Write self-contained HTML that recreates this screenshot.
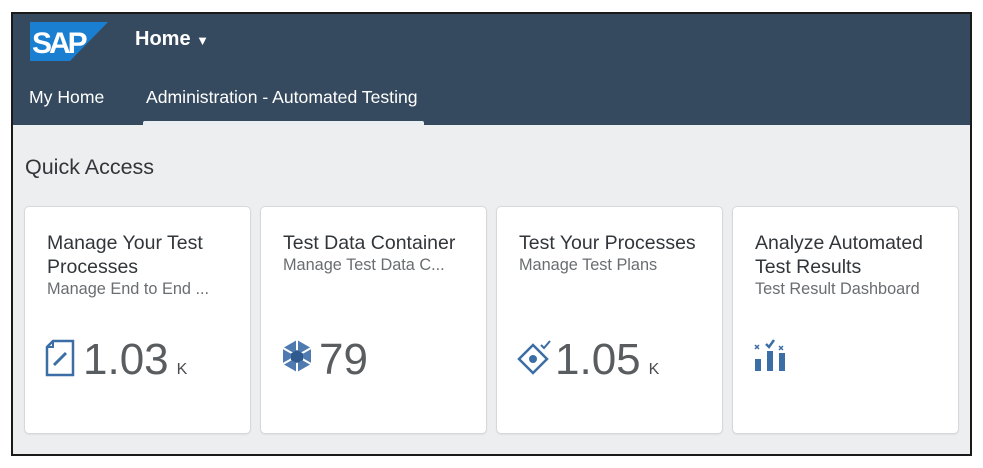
<!DOCTYPE html><html><head><style>
body{margin:0;width:983px;height:468px;background:#fff;font-family:"Liberation Sans",sans-serif;position:relative;overflow:hidden}
.frame{position:absolute;left:11px;top:12px;width:957px;height:440px;border:2px solid #1a1a1a;background:#eceeef;overflow:hidden}
.hdr{position:absolute;left:0;top:0;width:100%;height:111px;background:#354a5f}
.logo{position:absolute;left:17px;top:8px}
.home{position:absolute;left:122px;top:14px;color:#fff;font-weight:bold;font-size:20px}
.nav{position:absolute;top:73px;color:#fff;font-size:17.6px}
.ul{position:absolute;left:130px;top:107px;width:281px;height:4px;background:#e8eef2;border-radius:2px 2px 0 0}
.qa{position:absolute;left:12px;top:141px;font-size:21.5px;color:#32363a}
.tile{position:absolute;top:193px;width:225px;height:226px;background:#fff;border-radius:4px;box-shadow:0 0 0 1px #d6d9dc,0 1px 2px rgba(0,0,0,.15)}
.t{position:absolute;left:22px;top:24px;font-size:19.5px;color:#32363a;line-height:24px}
.s{font-size:16.3px;color:#6a6d70;line-height:20px}
.num{position:absolute;left:58px;top:128px;font-size:44px;color:#5a5d60;font-weight:300}
.k{font-size:16px;color:#4a4d50;margin-left:8px}
.ic{position:absolute;left:20px;top:132px}
</style></head><body><div class="frame">
<div class="hdr">
<svg class="logo" width="78" height="39" viewBox="0 0 78 39"><polygon points="0,0 78,0 40,39 0,39" fill="#1a7fd0"/><text x="2" y="31" font-family="Liberation Sans" font-weight="bold" font-size="30" fill="#fff" letter-spacing="-3">SAP</text></svg>
<div class="home">Home <span style="font-size:13px">▼</span></div>
<div class="nav" style="left:16px">My Home</div>
<div class="nav" style="left:133px">Administration - Automated Testing</div>
<div class="ul"></div>
</div>
<div class="qa">Quick Access</div>
<div class="tile" style="left:12px"><div class="t">Manage Your Test<br>Processes<div class="s">Manage End to End ...</div></div>
<svg class="ic" width="30" height="38" viewBox="0 0 30 38"><path d="M8 2H28V36H2V8Z" fill="none" stroke="#3b6ea5" stroke-width="2.5"/><path d="M2 8H8V2" fill="none" stroke="#3b6ea5" stroke-width="2"/><path d="M9 26L21 14" stroke="#3b6ea5" stroke-width="3"/></svg>
<div class="num">1.03<span class="k">K</span></div></div>
<div class="tile" style="left:248px"><div class="t">Test Data Container<div class="s">Manage Test Data C...</div></div>
<svg class="ic" width="32" height="34" viewBox="0 0 32 34"><polygon points="16,1 30,9 30,25 16,33 2,25 2,9" fill="#4f7bb0"/><path d="M16 1V33M2 9L30 25M30 9L2 25" stroke="#fff" stroke-width="2"/><polygon points="16,11 22,14.5 22,21 16,24 10,21 10,14.5" fill="#2e5a8e"/></svg>
<div class="num">79</div></div>
<div class="tile" style="left:484px"><div class="t">Test Your Processes<div class="s">Manage Test Plans</div></div>
<svg class="ic" width="36" height="36" viewBox="0 0 36 36"><polygon points="16,6 30,20 16,34 2,20" fill="none" stroke="#3b6ea5" stroke-width="2.5"/><circle cx="16" cy="20" r="4" fill="#3b6ea5"/><path d="M24 6L27 9L33 2" fill="none" stroke="#3b6ea5" stroke-width="2"/></svg>
<div class="num">1.05<span class="k">K</span></div></div>
<div class="tile" style="left:720px"><div class="t">Analyze Automated<br>Test Results<div class="s">Test Result Dashboard</div></div>
<svg class="ic" width="36" height="34" viewBox="0 0 36 34"><rect x="2" y="20" width="6" height="12" fill="#3b6ea5"/><rect x="14" y="12" width="6" height="20" fill="#3b6ea5"/><rect x="26" y="14" width="6" height="18" fill="#3b6ea5"/><path d="M2 6L6 10M6 6L2 10M26 7L30 11M30 7L26 11" stroke="#3b6ea5" stroke-width="1.5"/><path d="M13 5L16 8L21 1" fill="none" stroke="#3b6ea5" stroke-width="2.5"/></svg>
</div>
</div></body></html>
